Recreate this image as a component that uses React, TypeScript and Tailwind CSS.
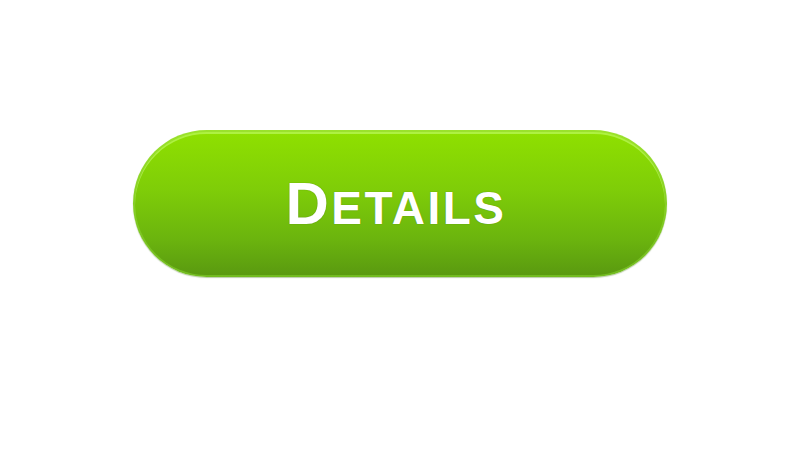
export default function App() {
  return (
    <div className="w-[800px] h-[450px] bg-white flex items-start justify-center pt-[130px]">
      <button
        type="button"
        className="w-[534px] h-[147px] rounded-full p-[2px] bg-[linear-gradient(to_bottom,#9be22c,#72bb20)] shadow-[0_1px_1px_rgba(60,110,10,0.35)]"
      >
        <span className="flex w-full h-full items-center justify-center rounded-full bg-[linear-gradient(to_bottom,#8fe000_0%,#7fcd08_40%,#6bb40e_75%,#5a9a10_100%)] shadow-[inset_0_2px_0_rgba(200,255,120,0.55)]">
          <span
            className="text-white font-bold tracking-[2.5px] leading-none pt-[1px] pr-[8px] [text-shadow:0_0_1px_rgba(40,80,0,0.6)]"
            style={{ fontFamily: '"Liberation Sans", Arial, sans-serif' }}
          >
            <span className="text-[60px]">D</span>
            <span className="text-[46px]">ETAILS</span>
          </span>
        </span>
      </button>
    </div>
  );
}
